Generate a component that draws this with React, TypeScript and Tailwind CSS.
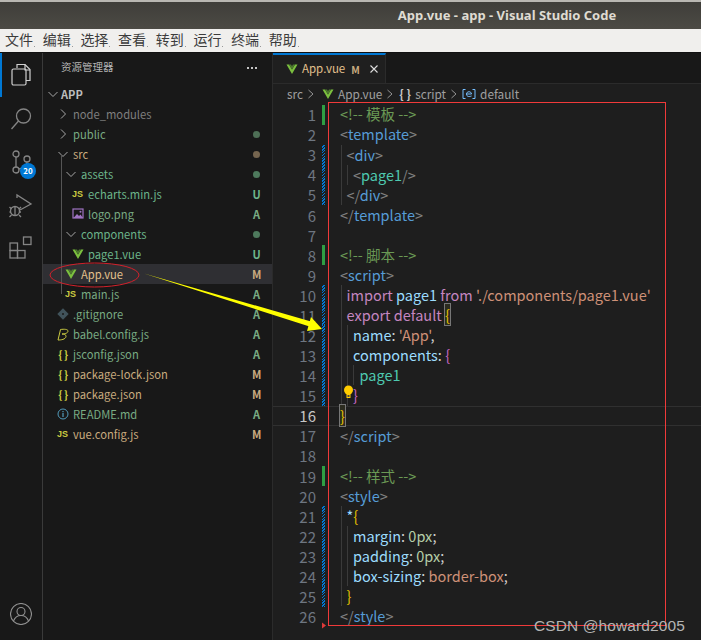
import React from "react";

const Vue = ({ s = 12 }: { s?: number }) => (
  <svg width={s} height={s} viewBox="0 0 24 24" className="shrink-0">
    <path d="M1 3h5l6 10L18 3h5L12 22z" fill="#7bbf3f" />
    <path d="M6 3h4l2 3.5L14 3h4l-6 10z" fill="#4d7a2e" />
  </svg>
);

const JsIcon = () => (
  <span className="w-[12px] shrink-0 font-['Liberation_Sans',sans-serif] text-[9px] font-bold leading-none text-[#cbcb41]">JS</span>
);
const Braces = () => (
  <span className="w-[12px] shrink-0 text-center text-[11px] font-bold leading-none tracking-[-0.5px] text-[#cbcb41]">{"{ }"}</span>
);
const ImgIcon = () => (
  <svg width="12" height="12" viewBox="0 0 12 12" className="shrink-0">
    <rect x="1" y="1" width="10" height="9" fill="none" stroke="#a074c4" strokeWidth="1.2" />
    <path d="M1.5 10 5 6l2 2 1.5-1.5L11 10z" fill="#a074c4" />
    <circle cx="8.5" cy="3.8" r="1" fill="#a074c4" />
  </svg>
);
const GitIcon = () => (
  <svg width="12" height="12" viewBox="0 0 12 12" className="shrink-0">
    <rect x="2" y="2" width="8" height="8" transform="rotate(45 6 6)" fill="#41535b" />
    <circle cx="6" cy="6" r="1" fill="#1a1a1a" />
  </svg>
);
const BabelIcon = () => (
  <svg width="12" height="13" viewBox="0 0 12 13" className="shrink-0" fill="none" stroke="#cbcb41" strokeWidth="1">
    <path d="M3.500 1.500 1 12c3 0 7.500-.5 8-3.500.3-2-2-2.500-4-2.500 3 0 6-1 6-3 0-1.800-4-2-7.500-1.500z" />
  </svg>
);
const InfoIcon = () => (
  <svg width="12" height="12" viewBox="0 0 12 12" className="shrink-0">
    <circle cx="6" cy="6" r="5" fill="none" stroke="#519aba" strokeWidth="1" />
    <rect x="5.4" y="5" width="1.2" height="4" fill="#519aba" />
    <rect x="5.4" y="3" width="1.2" height="1.2" fill="#519aba" />
  </svg>
);
const Chevron = ({ open }: { open: boolean }) => (
  <svg width="12" height="12" viewBox="0 0 12 12" className="shrink-0" fill="none" stroke="#b5b5b5" strokeWidth="0.9">
    {open ? <path d="M1.5 4 6 8.5 10.5 4" /> : <path d="M4 1.5 8.5 6 4 10.5" />}
  </svg>
);

type Row = {
  name: string;
  pl: string;
  icon: React.ReactNode;
  color: string;
  badge?: string;
  badgeColor?: string;
  dot?: string;
  active?: boolean;
};
const G = "text-[#6cb58a]";
const T = "text-[#c9ab7f]";
const A = "text-[#79ab83]";
const rows: Row[] = [
  { name: "node_modules", pl: "pl-[14px]", icon: <Chevron open={false} />, color: "text-[#7f7f7f]" },
  { name: "public", pl: "pl-[14px]", icon: <Chevron open={false} />, color: A, dot: "bg-[#4e6f56]" },
  { name: "src", pl: "pl-[14px]", icon: <Chevron open />, color: T, dot: "bg-[#75654f]" },
  { name: "assets", pl: "pl-[22px]", icon: <Chevron open />, color: G, dot: "bg-[#4e7a5d]" },
  { name: "echarts.min.js", pl: "pl-[29px]", icon: <JsIcon />, color: G, badge: "U", badgeColor: G },
  { name: "logo.png", pl: "pl-[29px]", icon: <ImgIcon />, color: A, badge: "A", badgeColor: A },
  { name: "components", pl: "pl-[22px]", icon: <Chevron open />, color: G, dot: "bg-[#4e7a5d]" },
  { name: "page1.vue", pl: "pl-[29px]", icon: <Vue />, color: G, badge: "U", badgeColor: G },
  { name: "App.vue", pl: "pl-[22px]", icon: <Vue />, color: "text-[#e2c08d]", badge: "M", badgeColor: T, active: true },
  { name: "main.js", pl: "pl-[22px]", icon: <JsIcon />, color: A, badge: "A", badgeColor: A },
  { name: ".gitignore", pl: "pl-[14px]", icon: <GitIcon />, color: A, badge: "A", badgeColor: A },
  { name: "babel.config.js", pl: "pl-[14px]", icon: <BabelIcon />, color: A, badge: "A", badgeColor: A },
  { name: "jsconfig.json", pl: "pl-[14px]", icon: <Braces />, color: A, badge: "A", badgeColor: A },
  { name: "package-lock.json", pl: "pl-[14px]", icon: <Braces />, color: T, badge: "M", badgeColor: T },
  { name: "package.json", pl: "pl-[14px]", icon: <Braces />, color: T, badge: "M", badgeColor: T },
  { name: "README.md", pl: "pl-[14px]", icon: <InfoIcon />, color: A, badge: "A", badgeColor: A },
  { name: "vue.config.js", pl: "pl-[14px]", icon: <JsIcon />, color: T, badge: "M", badgeColor: T },
];

const P = "text-[#808080]";
const B = "text-[#569cd6]";
const C = "text-[#6a9955]";
const K = "text-[#4ec9b0]";
const I = "text-[#c586c0]";
const V = "text-[#9cdcfe]";
const S = "text-[#ce9178]";
const N = "text-[#b5cea8]";
const W = "text-[#d4d4d4]";
const M = "text-[#c868c4]";
const Y = "text-[#e6c200]";

type Tok = [string, string, boolean?];
type Line = { t: Tok[]; git?: "g" | "b"; guides?: string[]; cur?: boolean };
const GA = "left-[1px]";
const GB = "left-[7px]";
const GC = "left-[13px]";
const lines: Line[] = [
  { t: [["<!-- 模板 -->", C]], git: "g" },
  { t: [["<", P], ["template", B], [">", P]] },
  { t: [["  <", P], ["div", B], [">", P]], git: "b", guides: [GA] },
  { t: [["    <", P], ["page1", K], ["/>", P]], git: "b", guides: [GA, GB] },
  { t: [["  </", P], ["div", B], [">", P]], git: "b", guides: [GA] },
  { t: [["</", P], ["template", B], [">", P]] },
  { t: [] },
  { t: [["<!-- 脚本 -->", C]], git: "g" },
  { t: [["<", P], ["script", B], [">", P]] },
  { t: [["  ", W], ["import", I], [" ", W], ["page1", V], [" ", W], ["from", I], [" ", W], ["'./components/page1.vue'", S]], git: "b", guides: [GA] },
  { t: [["  ", W], ["export default", I], [" ", W], ["{", Y, true]], git: "b", guides: [GA] },
  { t: [["    ", W], ["name", V], [": ", W], ["'App'", S], [",", W]], git: "b", guides: [GA, GB] },
  { t: [["    ", W], ["components", V], [": ", W], ["{", M]], git: "b", guides: [GA, GB] },
  { t: [["      ", W], ["page1", K]], git: "b", guides: [GA, GB, GC] },
  { t: [["    ", W], ["}", M]], git: "b", guides: [GA, GB] },
  { t: [["}", Y, true]], cur: true },
  { t: [["</", P], ["script", B], [">", P]] },
  { t: [] },
  { t: [["<!-- 样式 -->", C]], git: "g" },
  { t: [["<", P], ["style", B], [">", P]] },
  { t: [["  ", W], ["*", V], ["{", Y]], git: "b", guides: [GA] },
  { t: [["    ", W], ["margin", V], [": ", W], ["0px", N], [";", W]], git: "b", guides: [GA, GB] },
  { t: [["    ", W], ["padding", V], [": ", W], ["0px", N], [";", W]], git: "b", guides: [GA, GB] },
  { t: [["    ", W], ["box-sizing", V], [": ", W], ["border-box", S], [";", W]], git: "b", guides: [GA, GB] },
  { t: [["  ", W], ["}", Y]], git: "b", guides: [GA] },
  { t: [["</", P], ["style", B], [">", P]] },
];

const menu = ["文件", "编辑", "选择", "查看", "转到", "运行", "终端", "帮助"];

export default function App() {
  return (
    <div className="relative flex h-[640px] w-[701px] flex-col overflow-hidden bg-[#1e1e1e] font-['Noto_Sans_CJK_SC',sans-serif]">
      <div className="flex h-[29px] items-center justify-center border-t-2 border-[#b9b7b2] bg-gradient-to-b from-[#3f3e3a] to-[#4c4a44] pl-[313px]">
        <span className="font-['Noto_Sans',sans-serif] text-[13px] font-bold text-[#dfdbd2]">App.vue - app - Visual Studio Code</span>
      </div>
      <div className="flex h-[23px] items-center gap-[7.7px] bg-[#f0efed] pb-[2px] pl-[5px] text-[14px] text-[#3c3c3c]">
        {menu.map((m) => (
          <span key={m} className="flex items-end gap-[1px]">
            {m}
            <span className="mb-[3px] h-[1px] w-[1px] bg-[#999]" />
          </span>
        ))}
      </div>
      <div className="flex min-h-0 flex-1 border-t border-[#111]">
        {/* activity bar */}
        <div className="flex w-[43px] shrink-0 flex-col items-center border-r border-[#3a3a3a] bg-[#181818]">
          <div className="relative flex h-[44px] w-full items-center justify-center border-l-2 border-[#0078d4] pr-[2px]">
            <svg width="22" height="24" viewBox="0 0 22 24" fill="none" stroke="#d0d0d0" strokeWidth="1.2">
              <path d="M7 5V1.5h8l5 5V17.500h-4" />
              <path d="M15 1.500V7h5" />
              <rect x="2" y="6" width="14" height="16" rx="1.500" />
            </svg>
          </div>
          <div className="flex h-[44px] w-full items-center justify-center">
            <svg width="24" height="24" viewBox="0 0 24 24" fill="none" stroke="#858585" strokeWidth="1.3">
              <circle cx="14.500" cy="9" r="7" />
              <path d="M9.500 14 2.500 22" />
            </svg>
          </div>
          <div className="relative flex h-[44px] w-full items-center justify-center">
            <svg width="24" height="26" viewBox="0 0 24 26" fill="none" stroke="#858585" strokeWidth="1.3">
              <circle cx="7" cy="4" r="3" />
              <circle cx="7" cy="20" r="3" />
              <circle cx="18" cy="9" r="3" />
              <path d="M7 7v10M10 19c5-1 8-4 8-7" />
            </svg>
            <span className="absolute left-[20px] top-[22px] flex h-[16px] w-[16px] items-center justify-center rounded-full bg-[#0078d4] text-[8px] font-bold text-white">20</span>
          </div>
          <div className="flex h-[42px] w-full items-center justify-center">
            <svg width="24" height="26" viewBox="0 0 24 26" fill="none" stroke="#858585" strokeWidth="1.3">
              <path d="M8 5V2l14 9-11 6" />
              <circle cx="6" cy="18" r="4.500" />
              <path d="M6 13.500V23M0.500 14l2 2M0.500 19h1.500M0.500 24l2-2M12 14l-2 2M12 19h-2M12 24l-2-2" />
            </svg>
          </div>
          <div className="flex h-[42px] w-full items-center justify-center">
            <svg width="24" height="24" viewBox="0 0 24 24" fill="none" stroke="#858585" strokeWidth="1.3">
              <rect x="1" y="7" width="7.500" height="7.500" />
              <rect x="1" y="14.500" width="7.500" height="7.500" />
              <rect x="8.500" y="14.500" width="7.500" height="7.500" />
              <rect x="14.500" y="1" width="7.500" height="7.500" />
            </svg>
          </div>
          <div className="mt-auto flex h-[48px] w-full items-start justify-center pt-[11px]">
            <svg width="22" height="22" viewBox="0 0 22 22" fill="none" stroke="#909090" strokeWidth="1.1">
              <circle cx="11" cy="11" r="10.500" />
              <circle cx="11" cy="8.500" r="4" />
              <path d="M3.500 18c1.500-4 4-5.500 7.500-5.500s6 1.500 7.500 5.500" />
            </svg>
          </div>
        </div>
        {/* sidebar */}
        <div className="flex w-[230px] shrink-0 flex-col border-r border-[#2b2b2b] bg-[#181818] text-[11.2px] leading-none">
          <div className="flex h-[31px] shrink-0 items-center justify-between pb-[2px] pl-[18px] pr-[15px]">
            <span className="text-[10.500px] text-[#b3b3b3]">资源管理器</span>
            <span className="flex gap-[2px]">
              <span className="h-[2px] w-[2px] bg-[#c5c5c5]" />
              <span className="h-[2px] w-[2px] bg-[#c5c5c5]" />
              <span className="h-[2px] w-[2px] bg-[#c5c5c5]" />
            </span>
          </div>
          <div className="flex h-[20px] shrink-0 items-center gap-[2px] pl-[4px] text-[11px] font-bold text-[#bdbdbd]">
            <Chevron open />
            <span>APP</span>
          </div>
          <div className="relative flex flex-col">
            {rows.map((r) => (
              <div key={r.name} className={`flex h-[20px] items-center pr-[11px] ${r.pl} ${r.active ? "bg-[#2f2f33]" : ""}`}>
                <span className="flex w-[16px] shrink-0">{r.icon}</span>
                <span className={`flex-1 pt-[1px] ${r.color}`}>{r.name}</span>
                {r.badge && <span className={`w-[9px] text-center text-[11px] font-semibold ${r.badgeColor}`}>{r.badge}</span>}
                {r.dot && <span className={`mr-[1px] h-[7px] w-[7px] rounded-full ${r.dot}`} />}
              </div>
            ))}
            <span className="absolute left-[18px] top-[50px] h-[140px] w-[1px] bg-[#555]" />
          </div>
        </div>
        {/* editor */}
        <div className="flex min-w-0 flex-1 flex-col bg-[#1e1e1e]">
          <div className="flex h-[31px] shrink-0 border-b border-[#2b2b2b] bg-[#181818]">
            <div className="flex w-[113px] items-center gap-[3px] border-r border-[#2b2b2b] border-t-2 border-t-[#0078d4] bg-[#1f1f1f] pl-[13px] text-[11.500px] text-[#e2c08d]">
              <Vue />
              <span className="ml-[1px]">App.vue</span>
              <span className="ml-[3px] text-[10px] font-bold text-[#c9ab7f]">M</span>
              <svg width="10" height="10" viewBox="0 0 10 10" className="ml-[6px]" stroke="#ddd" strokeWidth="1.100">
                <path d="M1.500 1.500l7 7M8.500 1.500l-7 7" />
              </svg>
            </div>
          </div>
          <div className="flex h-[20.600px] shrink-0 items-center gap-[4px] pb-[1px] pl-[14px] text-[11.800px] text-[#a0a0a0]">
            <span>src</span>
            <Crumb />
            <span className="ml-[3px] flex"><Vue /></span>
            <span>App.vue</span>
            <Crumb />
            <span className="ml-[1px] text-[12px] font-bold text-[#c5c5c5]">{"{ }"}</span>
            <span>script</span>
            <Crumb />
            <svg width="14" height="12" viewBox="0 0 14 12" fill="none" stroke="#75beff" strokeWidth="1" className="shrink-0">
              <path d="M3.500 1.500H1v9h2.500M10.500 1.500H13v9h-2.500" />
              <path d="M4.500 6h5c0-3-5-3-5 0s3 2.800 5 2" />
            </svg>
            <span>default</span>
          </div>
          <div className="relative flex flex-col text-[14.500px]">
            {lines.map((l, i) => (
              <div key={i} className={`relative flex h-[20.08px] items-center leading-none ${l.cur ? "shadow-[inset_0_1px_0_#303030,inset_0_-1px_0_#303030]" : ""}`}>
                <span className={`w-[43px] shrink-0 text-right text-[15px] ${l.cur ? "text-[#c6c6c6]" : "text-[#6e7681]"}`}>{i + 1}</span>
                <span className="flex h-full w-[6px] shrink-0" />
                <span
                  className={`h-full w-[3px] shrink-0 ${
                    l.git === "g"
                      ? "bg-[#2ea043]"
                      : l.git === "b"
                        ? "bg-[repeating-linear-gradient(-45deg,#0078d4,#0078d4_1px,#1e1e1e_1px,#1e1e1e_2px)]"
                        : ""
                  }`}
                />
                <span className="relative ml-[15px] whitespace-pre">
                  {l.guides?.map((g) => (
                    <span key={g} className={`absolute top-[-3px] h-[20.08px] w-[1px] bg-[#3a3a3a] ${g}`} />
                  ))}
                  {l.t.map(([s, c, box], j) => (
                    <span key={j} className={`${c} ${box ? "outline outline-1 outline-[#777] bg-[#2c2c20]" : ""}`}>{s}</span>
                  ))}
                </span>
              </div>
            ))}
          </div>
        </div>
      </div>

      {/* annotations */}
      <span className="absolute left-[328px] top-[102px] h-[524px] w-[338px] border border-[#f03a3a]" />
      <svg className="absolute left-0 top-0" width="701" height="640" viewBox="0 0 701 640" fill="none">
        <ellipse cx="94.500" cy="275" rx="44.500" ry="12" stroke="#d3212b" strokeWidth="1" />
        <path d="M144 273.500 L311 321.500 L309.500 326.500 Z" fill="#ffff00" />
        <path d="M322 329 L307 331 L311 317 Z" fill="#ffff00" />
        <path d="M322 622.500 L326 625.500 L322 628.500 Z" fill="#e03a3a" />
      </svg>
      <svg className="absolute left-[343px] top-[385px]" width="11" height="14" viewBox="0 0 11 14">
        <circle cx="5.500" cy="5" r="4.500" fill="#ffcc00" />
        <rect x="3.500" y="9" width="4" height="4" fill="#ffcc00" />
        <rect x="4.500" y="10" width="2" height="2" fill="#444" />
      </svg>
      <span className="absolute left-[534px] top-[614px] font-['Liberation_Sans',sans-serif] text-[15.500px] tracking-[0.1px] text-[#b4b4b4]">CSDN @howard2005</span>
    </div>
  );
}

function Crumb() {
  return (
    <svg width="8" height="12" viewBox="0 0 8 12" fill="none" stroke="#a0a0a0" strokeWidth="0.9" className="shrink-0">
      <path d="M1.500 2 6 6 1.500 10" />
    </svg>
  );
}
